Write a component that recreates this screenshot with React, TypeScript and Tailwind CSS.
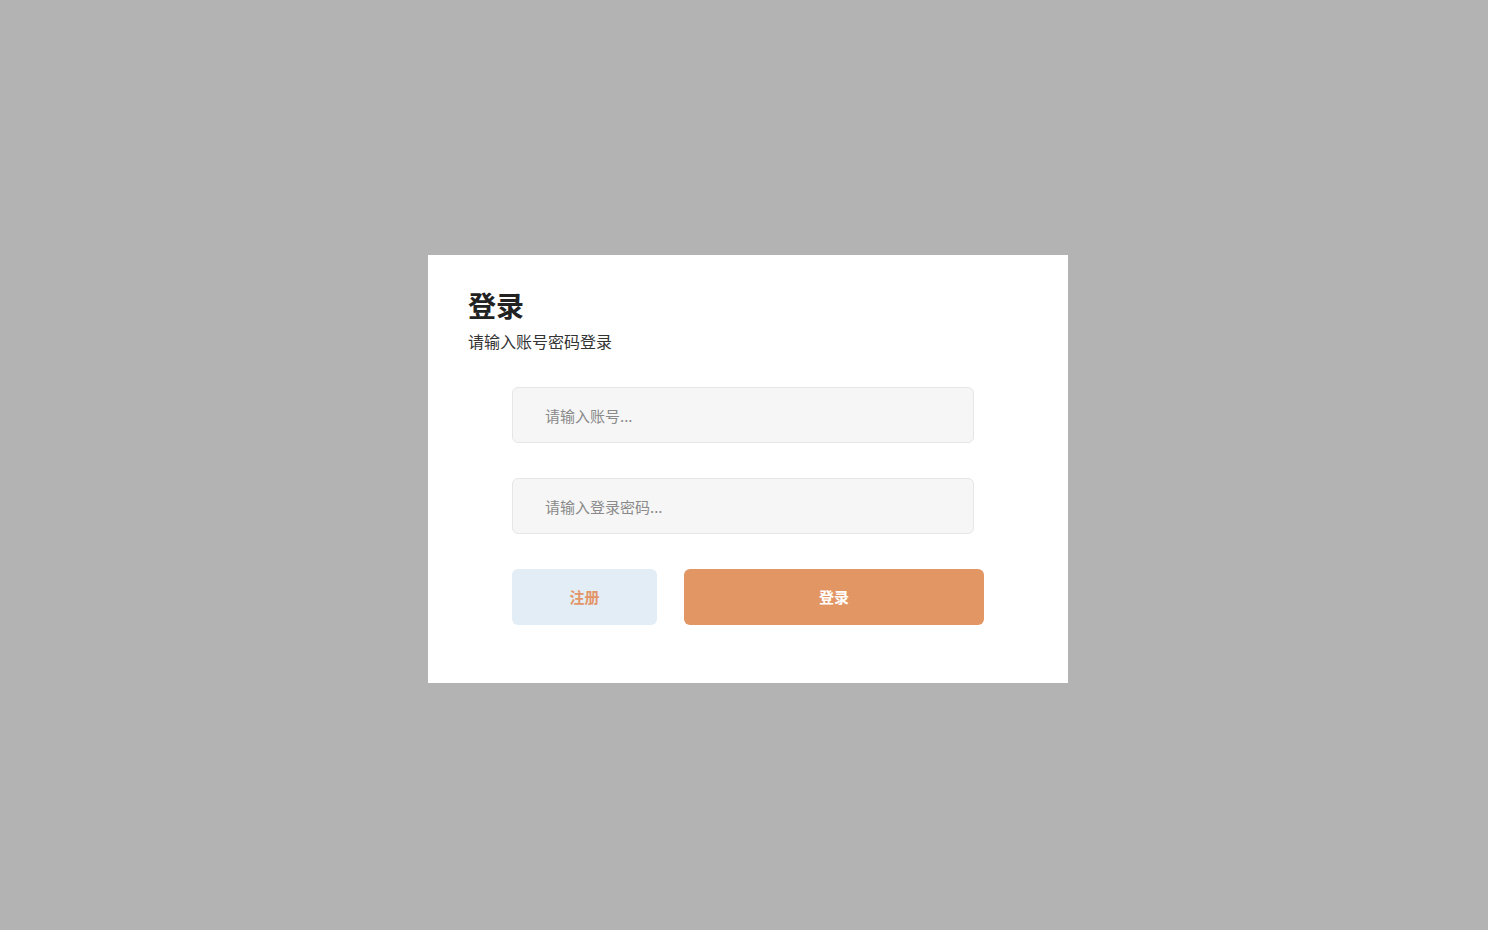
export default function App() {
  return (
    <div
      className="min-h-screen w-full bg-[#b3b3b3] flex items-center justify-center pl-2 pt-2"
      style={{ fontFamily: '"Microsoft YaHei", "Noto Sans CJK SC", sans-serif' }}
    >
      <div className="w-[640px] h-[428px] bg-white px-10 pt-[31px]">
        <h1 className="text-[28px] leading-[38px] font-bold text-[#222]">登录</h1>
        <p className="mt-[7px] text-[16px] leading-[20px] text-[#333]">请输入账号密码登录</p>

        <div className="ml-[44px] mt-[36px] flex flex-col gap-[35px]">
          <input
            type="text"
            placeholder="请输入账号..."
            className="w-[462px] h-[56px] rounded-[6px] border border-[#e6e6e6] bg-[#f6f6f6] px-8 text-[15px] text-[#333] placeholder:text-[#8a8a8a] outline-none"
          />
          <input
            type="password"
            placeholder="请输入登录密码..."
            className="w-[462px] h-[56px] rounded-[6px] border border-[#e6e6e6] bg-[#f6f6f6] px-8 text-[15px] text-[#333] placeholder:text-[#8a8a8a] outline-none"
          />
          <div className="flex gap-[27px]">
            <button className="w-[145px] h-[56px] rounded-[6px] bg-[#e3edf5] text-[15px] font-bold text-[#e3956a]">
              注册
            </button>
            <button className="w-[300px] h-[56px] rounded-[6px] bg-[#e29664] text-[15px] font-bold text-white">
              登录
            </button>
          </div>
        </div>
      </div>
    </div>
  );
}
